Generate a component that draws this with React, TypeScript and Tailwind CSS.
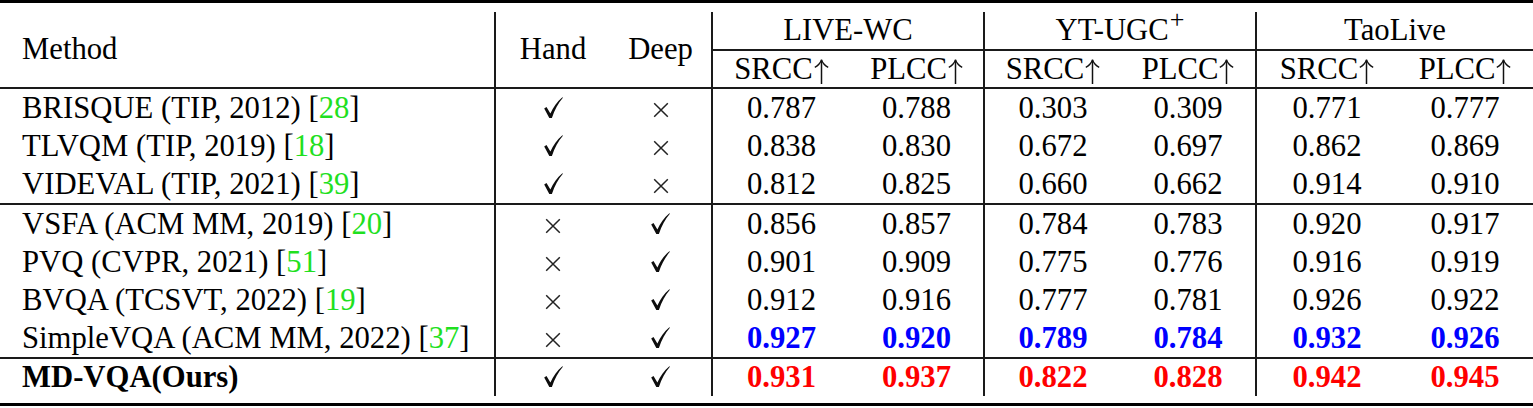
import React from "react";

const GRID =
  "grid grid-cols-[496px_114px_103px_137px_135px_136px_136px_140px_136px]";
const V = "border-r-2 border-[#1a1a1a]";

type Cell = { v: string; c?: "b" | "r" };

const Check = () => (
  <span>
    <svg
      width="19"
      height="21"
      viewBox="0 0 19 21"
      className="inline align-baseline"
    >
      <path
        d="M0.2 11.4 L2.5 9.9 L6.4 16.4 C9.2 10.2 13 4.7 18.4 0.2 L18.9 0.8 C14.2 6.3 10.7 12.9 7.9 20.9 L5.3 20.9 Z"
        fill="#0d0d0d"
      />
    </svg>
  </span>
);
const Times = () => (
  <span>
    <svg
      width="16"
      height="16"
      viewBox="0 0 16 16"
      className="inline align-baseline"
    >
      <path d="M1.2 1.2 L14.8 14.8 M14.8 1.2 L1.2 14.8" stroke="#222" strokeWidth="1.5" />
    </svg>
  </span>
);

const Up = () => (
  <svg
    width="15"
    height="25"
    viewBox="0 0 15 25"
    className="inline align-[-5px] ml-[1px]"
  >
    <path d="M7.5 1.5 L7.5 25" stroke="#111" strokeWidth="1.5" fill="none" />
    <path
      d="M7.5 0.8 C6.6 3.6 3.8 6.8 0.8 8.4 M7.5 0.8 C8.4 3.6 11.2 6.8 14.2 8.4"
      stroke="#111"
      strokeWidth="1.3"
      fill="none"
    />
  </svg>
);

const Num = ({ cell }: { cell: Cell }) => {
  if (cell.c === "b")
    return <span className="font-bold text-[#0000ff]">{cell.v}</span>;
  if (cell.c === "r")
    return <span className="font-bold text-[#ff0000]">{cell.v}</span>;
  return <span>{cell.v}</span>;
};

type Row = {
  name: string;
  venue?: string;
  cite?: string;
  bold?: boolean;
  hand: boolean;
  deep: boolean;
  vals: Cell[];
};

const n = (...xs: string[]): Cell[] => xs.map((v) => ({ v }));
const b = (...xs: string[]): Cell[] => xs.map((v) => ({ v, c: "b" as const }));
const r = (...xs: string[]): Cell[] => xs.map((v) => ({ v, c: "r" as const }));

const block1: Row[] = [
  { name: "BRISQUE", venue: "(TIP, 2012)", cite: "28", hand: true, deep: false, vals: n("0.787", "0.788", "0.303", "0.309", "0.771", "0.777") },
  { name: "TLVQM", venue: "(TIP, 2019)", cite: "18", hand: true, deep: false, vals: n("0.838", "0.830", "0.672", "0.697", "0.862", "0.869") },
  { name: "VIDEVAL", venue: "(TIP, 2021)", cite: "39", hand: true, deep: false, vals: n("0.812", "0.825", "0.660", "0.662", "0.914", "0.910") },
];
const block2: Row[] = [
  { name: "VSFA", venue: "(ACM MM, 2019)", cite: "20", hand: false, deep: true, vals: n("0.856", "0.857", "0.784", "0.783", "0.920", "0.917") },
  { name: "PVQ", venue: "(CVPR, 2021)", cite: "51", hand: false, deep: true, vals: n("0.901", "0.909", "0.775", "0.776", "0.916", "0.919") },
  { name: "BVQA", venue: "(TCSVT, 2022)", cite: "19", hand: false, deep: true, vals: n("0.912", "0.916", "0.777", "0.781", "0.926", "0.922") },
  { name: "SimpleVQA", venue: "(ACM MM, 2022)", cite: "37", hand: false, deep: true, vals: b("0.927", "0.920", "0.789", "0.784", "0.932", "0.926") },
];
const block3: Row[] = [
  { name: "MD-VQA(Ours)", bold: true, hand: true, deep: true, vals: r("0.931", "0.937", "0.822", "0.828", "0.942", "0.945") },
];

const DataRow = ({ row, h }: { row: Row; h: string }) => (
  <div className={`${GRID} ${h}`}>
    <div className={`${V} flex items-center pl-[22px]`}>
      {row.bold ? (
        <span className="font-bold">{row.name}</span>
      ) : (
        <span>
          {row.name} {row.venue} [<span className="text-[#1fe01f]">{row.cite}</span>]
        </span>
      )}
    </div>
    <div className="flex items-center justify-center">
      {row.hand ? <Check /> : <Times />}
    </div>
    <div className={`${V} flex items-center justify-center`}>
      {row.deep ? <Check /> : <Times />}
    </div>
    {row.vals.map((c, i) => (
      <div
        key={i}
        className={`flex items-center justify-center ${i === 1 || i === 3 ? V : ""}`}
      >
        <Num cell={c} />
      </div>
    ))}
  </div>
);

const Rule = ({ h }: { h: string }) => <div className={`${h} w-full bg-[#1a1a1a]`} />;

export default function App() {
  return (
    <div className="w-[1533px] h-[408px] bg-white text-black font-['Liberation_Serif','Times_New_Roman',serif] text-[30.7px] leading-none">
      <Rule h="h-[3px] bg-black" />
      <div className="h-[9px]" />
      {/* header */}
      <div className={`${GRID} grid-rows-[39px_36px]`}>
        <div className={`${V} row-span-2 flex items-center pl-[22px]`}>Method</div>
        <div className="row-span-2 flex items-center justify-center">Hand</div>
        <div className={`${V} row-span-2 flex items-center justify-center`}>Deep</div>
        <div className={`col-span-2 ${V} border-b-2 border-b-[#1a1a1a] flex items-center justify-center`}>
          LIVE-WC
        </div>
        <div className={`col-span-2 ${V} border-b-2 border-b-[#1a1a1a] flex items-center justify-center`}>
          <span>
            YT-UGC
            <span className="text-[26px] relative -top-[12px] ml-[1px]">+</span>
          </span>
        </div>
        <div className="col-span-2 border-b-2 border-b-[#1a1a1a] flex items-center justify-center">
          TaoLive
        </div>
        {["SRCC", "PLCC", "SRCC", "PLCC", "SRCC", "PLCC"].map((t, i) => (
          <div
            key={i}
            className={`flex items-center justify-center ${i === 1 || i === 3 ? V : ""}`}
          >
            <span>
              {t}
              <Up />
            </span>
          </div>
        ))}
      </div>
      <Rule h="h-[2px]" />
      {block1.map((row, i) => (
        <DataRow key={i} row={row} h="h-[38px]" />
      ))}
      <Rule h="h-[2px]" />
      {block2.map((row, i) => (
        <DataRow key={i} row={row} h="h-[38px]" />
      ))}
      <Rule h="h-[2px]" />
      {block3.map((row, i) => (
        <DataRow key={i} row={row} h="h-[37px]" />
      ))}
      <div className="h-[7px]" />
      <Rule h="h-[3px] bg-black" />
    </div>
  );
}
